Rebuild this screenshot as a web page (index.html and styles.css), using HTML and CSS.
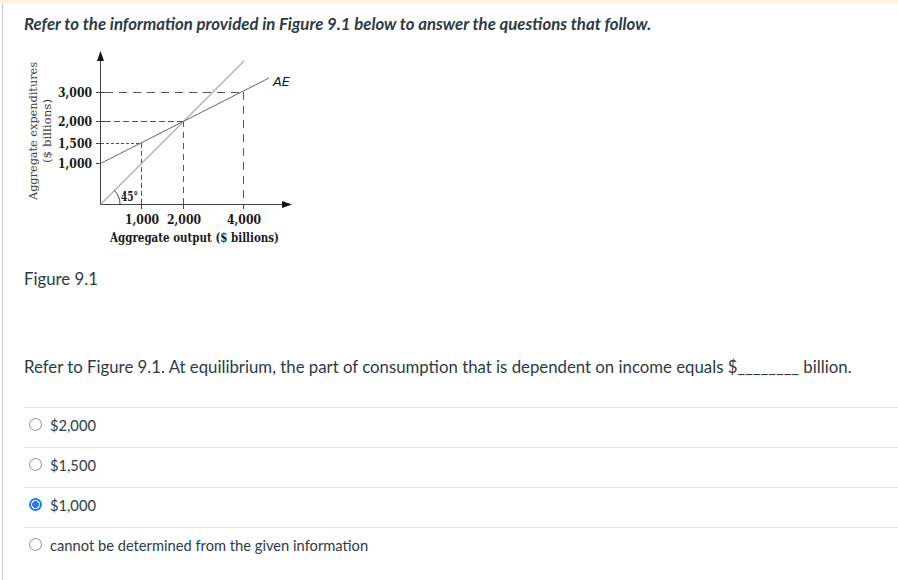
FILE: index.html
```html
<!DOCTYPE html>
<html>
<head>
<meta charset="utf-8">
<link rel="stylesheet" href="styles.css">
</head>
<body>
<div class="topbar"></div>
<div class="page">
  <div class="content">
    <p class="intro">Refer to the information provided in Figure 9.1 below to answer the questions that follow.</p>
    <div class="figure">
      <svg width="290" height="214" viewBox="20 42 290 214" xmlns="http://www.w3.org/2000/svg">
        <g stroke="#444" stroke-width="1" fill="none">
          <line x1="99.5" y1="60" x2="99.5" y2="204.5"/>
          <line x1="99" y1="204.5" x2="282" y2="204.5"/>
        </g>
        <polygon points="99.5,51 96,61 103,61" fill="#111"/>
        <polygon points="291,204.5 281,201 281,208" fill="#111"/>
        <g stroke="#444" stroke-width="1">
          <line x1="95" y1="92.5" x2="104" y2="92.5"/>
          <line x1="95" y1="121.5" x2="104" y2="121.5"/>
          <line x1="95" y1="143.5" x2="99" y2="143.5"/>
          <line x1="95" y1="163.5" x2="99" y2="163.5"/>
          <line x1="140.5" y1="204" x2="140.5" y2="209"/>
          <line x1="182.5" y1="204" x2="182.5" y2="209"/>
          <line x1="242.5" y1="204" x2="242.5" y2="209"/>
        </g>
        <g stroke="#555" stroke-width="1" fill="none">
          <line x1="104" y1="92.5" x2="242" y2="92.5" stroke-dasharray="8 6"/>
          <line x1="104" y1="121.5" x2="182" y2="121.5" stroke-dasharray="6 3"/>
          <line x1="100" y1="143.5" x2="140" y2="143.5" stroke-dasharray="3 2"/>
          <line x1="140.5" y1="143" x2="140.5" y2="204" stroke-dasharray="5 3"/>
          <line x1="182.5" y1="121" x2="182.5" y2="204" stroke-dasharray="6 5"/>
          <line x1="242.5" y1="92" x2="242.5" y2="204" stroke-dasharray="8 6"/>
        </g>
        <line x1="99.5" y1="204.5" x2="243" y2="61" stroke="#aaa" stroke-width="1.1"/>
        <line x1="99.5" y1="163.5" x2="268" y2="78" stroke="#666" stroke-width="1"/>
        <path d="M 119 204.5 A 20 20 0 0 0 113.5 190.5" stroke="#444" fill="none"/>
        <g font-family="'DejaVu Serif', serif" fill="#1a1a1a" font-size="12" font-weight="bold">
          <text x="91" y="97" text-anchor="end" textLength="34" lengthAdjust="spacingAndGlyphs">3,000</text>
          <text x="91" y="126" text-anchor="end" textLength="34" lengthAdjust="spacingAndGlyphs">2,000</text>
          <text x="91" y="148" text-anchor="end" textLength="34" lengthAdjust="spacingAndGlyphs">1,500</text>
          <text x="91" y="168" text-anchor="end" textLength="34" lengthAdjust="spacingAndGlyphs">1,000</text>
          <text x="120" y="201" textLength="17" lengthAdjust="spacingAndGlyphs">45°</text>
          <text x="124" y="224" textLength="34" lengthAdjust="spacingAndGlyphs">1,000</text>
          <text x="166" y="224" textLength="34" lengthAdjust="spacingAndGlyphs">2,000</text>
          <text x="226" y="224" textLength="34" lengthAdjust="spacingAndGlyphs">4,000</text>
          <text x="109" y="242" textLength="169" lengthAdjust="spacingAndGlyphs">Aggregate output ($ billions)</text>
        </g>
        <text x="272" y="86" font-family="'DejaVu Sans', sans-serif" font-size="12" font-style="italic" fill="#1a1a1a" textLength="17" lengthAdjust="spacingAndGlyphs">AE</text>
        <g font-family="'DejaVu Serif', serif" fill="#444" font-size="11">
          <text transform="translate(36,131) rotate(-90)" text-anchor="middle" textLength="138" lengthAdjust="spacingAndGlyphs">Aggregate expenditures</text>
          <text transform="translate(50,131) rotate(-90)" text-anchor="middle" textLength="64" lengthAdjust="spacingAndGlyphs">($ billions)</text>
        </g>
      </svg>
    </div>
    <p class="caption">Figure 9.1</p>
    <p class="question">Refer to Figure 9.1. At equilibrium, the part of consumption that is dependent on income equals $________ billion.</p>
    <div class="answers">
      <label class="answer"><span class="radio"></span><span>$2,000</span></label>
      <label class="answer"><span class="radio"></span><span>$1,500</span></label>
      <label class="answer"><span class="radio checked"></span><span>$1,000</span></label>
      <label class="answer"><span class="radio"></span><span>cannot be determined from the given information</span></label>
    </div>
  </div>
</div>
</body>
</html>
```
FILE: styles.css
```css
html, body {
  margin: 0;
  padding: 0;
  background: #fff;
}
body {
  font-family: Lato, "Noto Sans", sans-serif;
  color: #2d3b45;
  width: 898px;
  height: 580px;
  overflow: hidden;
}
.topbar {
  height: 3px;
  background: #fdf2dc;
}
.page {
  margin-left: 2px;
  border-left: 1px solid #c8cdd1;
  height: 577px;
}
.content {
  padding-left: 21px;
}
.intro {
  margin: 0;
  padding-top: 12px;
  font-size: 16.8px;
  line-height: 18px;
  font-weight: bold;
  font-style: italic;
}
.figure {
  margin-top: 9px;
  margin-left: -3px;
  height: 210px;
}
.figure svg {
  display: block;
  overflow: visible;
}
.caption {
  margin: 18px 0 0;
  font-size: 16.8px;
  line-height: 18px;
}
.question {
  margin: 70px 0 0;
  font-size: 16.8px;
  line-height: 18px;
}
.answers {
  margin-top: 31px;
}
.answer {
  display: flex;
  align-items: center;
  gap: 8px;
  height: 33px;
  padding-bottom: 6px;
  border-top: 1px solid #e2e5e7;
  font-size: 14.7px;
  padding-left: 5px;
}
.radio {
  width: 11px;
  height: 11px;
  border: 1px solid #8a9095;
  border-radius: 50%;
  box-sizing: content-box;
  background: #fff;
}
.radio.checked {
  border: 2px solid #1d7cf2;
  width: 9px;
  height: 9px;
  background: radial-gradient(circle, #1d7cf2 0 3.2px, #fff 3.6px);
}
```
